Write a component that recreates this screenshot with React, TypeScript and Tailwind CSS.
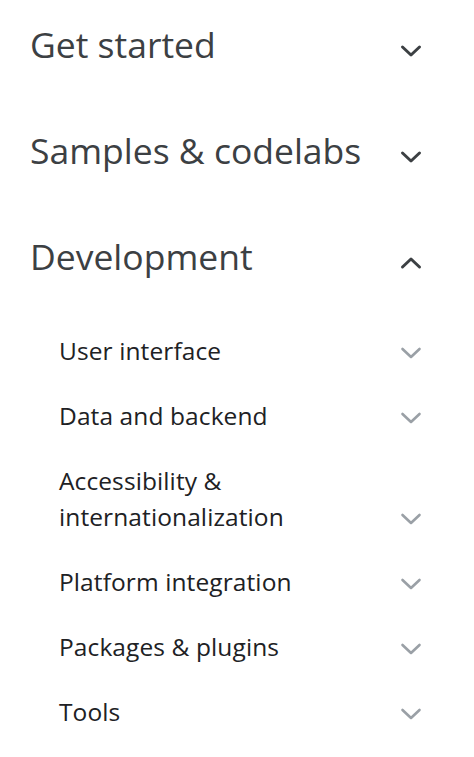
import React from 'react';

const mainItems = [
  { label: 'Get started', open: false },
  { label: 'Samples & codelabs', open: false },
  { label: 'Development', open: true },
];

const subItems = [
  'User interface',
  'Data and backend',
  'Accessibility & internationalization',
  'Platform integration',
  'Packages & plugins',
  'Tools',
];

const Chevron = ({ up, light }: { up?: boolean; light?: boolean }) => (
  <svg
    width="22"
    height="14"
    viewBox="0 0 22 14"
    fill="none"
    className={`${up ? 'rotate-180' : ''} ${light ? 'text-[#9aa0a6]' : 'text-[#3c4043]'}`}
  >
    <polyline
      points="2.5,3 11,11 19.5,3"
      stroke="currentColor"
      strokeWidth={light ? 2.6 : 3}
      strokeLinecap="round"
      strokeLinejoin="round"
    />
  </svg>
);

export default function App() {
  return (
    <div className="min-h-screen w-[474px] bg-white font-['Open_Sans','Roboto',sans-serif]">
      <nav className="flex flex-col">
        {mainItems.map((item, i) => (
          <div
            key={item.label}
            className={`flex h-[106px] items-center justify-between pl-[30px] pr-[52px] ${i === 0 ? '-mt-[8px]' : ''}`}
          >
            <span className="text-[35.5px] leading-none text-[#3c4043]">{item.label}</span>
            <span className="mt-[12px]">
              <Chevron up={item.open} />
            </span>
          </div>
        ))}

        <ul className="flex flex-col pt-[8px]">
          {subItems.map((s) => (
            <li key={s} className="flex items-end justify-between py-[14.5px] pl-[59px] pr-[52px]">
              <span className="max-w-[300px] text-[24.5px] leading-[36px] tracking-[0.1px] text-[#202124]">{s}</span>
              <span className="mb-[9px]">
                <Chevron light />
              </span>
            </li>
          ))}
        </ul>
      </nav>
    </div>
  );
}
